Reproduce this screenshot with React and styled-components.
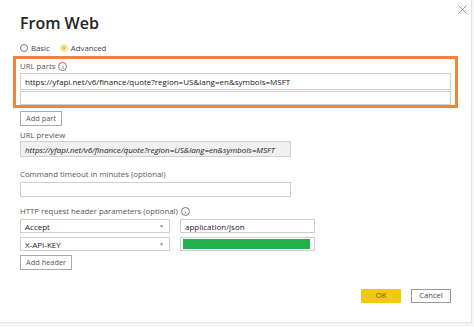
import React from "react";
import styled, { createGlobalStyle } from "styled-components";

const GlobalStyle = createGlobalStyle`
  body {
    margin: 0;
    background: #f6f6f6;
    font-family: "Open Sans", "Noto Sans", sans-serif;
    color: #333;
  }
`;

const Dialog = styled.div`
  width: 472px;
  height: 323px;
  box-sizing: border-box;
  background: #fff;
  border-right: 1px solid #e3e3e3;
  border-bottom: 1px solid #e3e3e3;
  padding: 0 20px;
  display: flex;
  flex-direction: column;
  font-size: 7.8px;
`;

const Header = styled.div`
  display: flex;
  justify-content: space-between;
  align-items: flex-start;
`;

const Title = styled.h1`
  margin: 13px 0 0;
  font-size: 16px;
  line-height: 20px;
  font-weight: 600;
  color: #252423;
`;

const CloseButton = styled.button`
  margin: 4px -16px 0 0;
  padding: 0;
  border: none;
  background: none;
  width: 10px;
  height: 10px;
  display: flex;
  align-items: center;
  justify-content: center;
`;

const RadioRow = styled.div`
  display: flex;
  gap: 10px;
  margin-top: 9px;
  height: 12px;
  align-items: center;
`;

const RadioLabel = styled.label`
  display: flex;
  align-items: center;
  gap: 3px;
  color: #444;
  line-height: 12px;
`;

const RadioDot = styled.span`
  width: 6px;
  height: 6px;
  border-radius: 50%;
  border: 1px solid ${(p) => (p.checked ? "#e7d27a" : "#777")};
  display: flex;
  align-items: center;
  justify-content: center;
  &::after {
    content: "";
    width: 4px;
    height: 4px;
    border-radius: 50%;
    background: ${(p) => (p.checked ? "#e9c32a" : "transparent")};
  }
`;

const Highlight = styled.div`
  margin: 2px -7px 0;
  padding: 2px 4px 0;
  border: 3px solid #f0843a;
  display: flex;
  flex-direction: column;
  gap: 1px;
`;

const Label = styled.div`
  display: flex;
  align-items: center;
  gap: 3px;
  color: #555;
  line-height: 11px;
  margin-top: ${(p) => p.top || 0}px;
  margin-bottom: ${(p) => p.bottom || 0}px;
`;

const InfoIcon = styled.span`
  width: 7px;
  height: 7px;
  border: 1px solid #777;
  border-radius: 50%;
  display: inline-flex;
  align-items: center;
  justify-content: center;
  font-size: 6px;
  line-height: 1;
  color: #666;
  font-family: "DejaVu Serif", serif;
`;

const Input = styled.div`
  box-sizing: border-box;
  height: ${(p) => p.h || 15}px;
  width: ${(p) => (p.w ? p.w + "px" : "100%")};
  border: 1px solid #cfcfcf;
  background: ${(p) => (p.muted ? "#f0f0f0" : "#fff")};
  color: #222;
  font-size: 8px;
  font-style: ${(p) => (p.muted ? "italic" : "normal")};
  padding: 0 4px;
  display: flex;
  align-items: center;
  white-space: nowrap;
  overflow: hidden;
`;

const Stack = styled.div`
  display: flex;
  flex-direction: column;
  width: ${(p) => p.width || "271px"};
  gap: ${(p) => p.gap || 0}px;
`;

const SmallButton = styled.button`
  align-self: flex-start;
  box-sizing: border-box;
  height: 15px;
  margin-top: ${(p) => p.top || 0}px;
  padding: 0 5px;
  border: 1px solid #aaa;
  background: #fff;
  color: #555;
  font-family: inherit;
  font-size: 7.4px;
  line-height: 1;
`;

const HeaderRow = styled.div`
  display: flex;
  gap: 10px;
  align-items: center;
`;

const Select = styled.div`
  box-sizing: border-box;
  width: 150px;
  height: 14px;
  border: 1px solid #cfcfcf;
  padding: 0 5px 0 4px;
  display: flex;
  align-items: center;
  justify-content: space-between;
  color: #222;
  font-size: 8px;
`;

const Caret = styled.span`
  font-size: 5px;
  color: #888;
`;

const Secret = styled.div`
  height: 10px;
  width: 131px;
  margin-left: -2px;
  background: #22b14c;
`;

const Footer = styled.div`
  margin-top: auto;
  margin-bottom: 19px;
  display: flex;
  justify-content: flex-end;
  gap: 10px;
`;

const DialogButton = styled.button`
  box-sizing: border-box;
  width: 40px;
  height: 14px;
  padding: 0;
  font-family: inherit;
  font-size: 7.6px;
  line-height: 1;
  color: ${(p) => (p.primary ? "#6b5a10" : "#444")};
  background: ${(p) => (p.primary ? "#f2c811" : "#fff")};
  border: 1px solid ${(p) => (p.primary ? "#f2c811" : "#999")};
`;

const url = "https://yfapi.net/v6/finance/quote?region=US&lang=en&symbols=MSFT";

export default function App() {
  return (
    <>
      <GlobalStyle />
      <Dialog>
        <Header>
          <Title>From Web</Title>
          <CloseButton>
            <svg width="9" height="9" viewBox="0 0 9 9">
              <path d="M0.5 0.5 L8.5 8.5 M8.5 0.5 L0.5 8.5" stroke="#888" strokeWidth="0.9" />
            </svg>
          </CloseButton>
        </Header>

        <RadioRow>
          <RadioLabel>
            <RadioDot />
            Basic
          </RadioLabel>
          <RadioLabel>
            <RadioDot checked />
            Advanced
          </RadioLabel>
        </RadioRow>

        <Highlight>
          <Label>
            URL parts <InfoIcon>i</InfoIcon>
          </Label>
          <Input h={17}>{url}</Input>
          <Input h={14} />
        </Highlight>

        <SmallButton top={3}>Add part</SmallButton>

        <Label top={4}>URL preview</Label>
        <Stack>
          <Input h={16} muted>
            {url}
          </Input>
        </Stack>

        <Label top={12} bottom={2}>Command timeout in minutes (optional)</Label>
        <Stack>
          <Input h={15} />
        </Stack>

        <Label top={9} bottom={2}>
          HTTP request header parameters (optional) <InfoIcon>i</InfoIcon>
        </Label>
        <Stack gap={4} width="auto">
          <HeaderRow>
            <Select>
              Accept <Caret>▼</Caret>
            </Select>
            <Input w={135} h={14}>application/json</Input>
          </HeaderRow>
          <HeaderRow>
            <Select>
              X-API-KEY <Caret>▼</Caret>
            </Select>
            <Input w={135} h={14}>
              <Secret />
            </Input>
          </HeaderRow>
        </Stack>
        <SmallButton top={4}>Add header</SmallButton>

        <Footer>
          <DialogButton primary>OK</DialogButton>
          <DialogButton>Cancel</DialogButton>
        </Footer>
      </Dialog>
    </>
  );
}
